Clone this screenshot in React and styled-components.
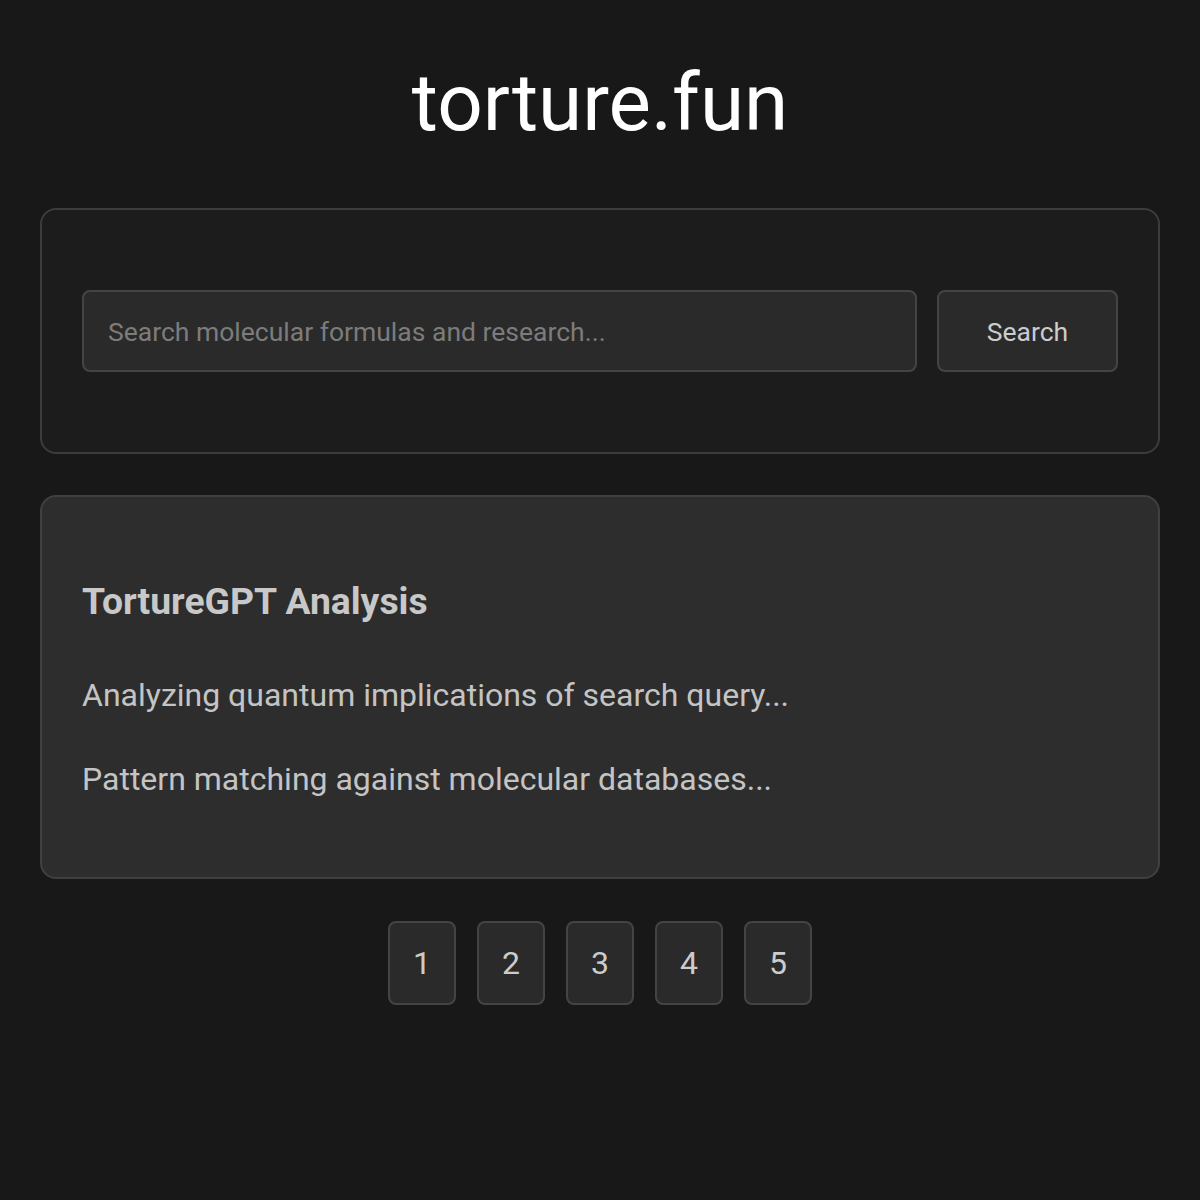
import React, { useState } from "react";
import styled, { createGlobalStyle } from "styled-components";

const GlobalStyle = createGlobalStyle`
  html, body {
    margin: 0;
    padding: 0;
    background: #181818;
  }
  body {
    font-family: Roboto, "Liberation Sans", sans-serif;
    color: #cccccc;
  }
`;

const App = () => {
  const [query, setQuery] = useState("");
  const [page, setPage] = useState(1);

  return (
    <>
      <GlobalStyle />
      <Page>
        <Title>torture.fun</Title>

        <SearchCard>
          <SearchRow>
            <SearchInput
              value={query}
              onChange={(e) => setQuery(e.target.value)}
              placeholder="Search molecular formulas and research..."
            />
            <SearchButton>Search</SearchButton>
          </SearchRow>
        </SearchCard>

        <ResultsCard>
          <ResultsHeading>TortureGPT Analysis</ResultsHeading>
          <ResultLine>Analyzing quantum implications of search query...</ResultLine>
          <ResultLine>Pattern matching against molecular databases...</ResultLine>
        </ResultsCard>

        <Pagination>
          {[1, 2, 3, 4, 5].map((n) => (
            <PageButton key={n} $active={page === n} onClick={() => setPage(n)}>
              {n}
            </PageButton>
          ))}
        </Pagination>
      </Page>
    </>
  );
};

export default App;

const Page = styled.div`
  min-height: 1200px;
  box-sizing: border-box;
  padding: 40px;
`;

const Title = styled.h1`
  margin: 15px 0 57px;
  text-align: center;
  font-size: 80px;
  font-weight: 400;
  line-height: 96px;
  color: #ffffff;
`;

const SearchCard = styled.div`
  background: #1c1c1c;
  border: 2px solid #3c3c3c;
  border-radius: 16px;
  padding: 80px 40px;
`;

const SearchRow = styled.div`
  display: flex;
  gap: 20px;
`;

const SearchInput = styled.input`
  flex: 1;
  height: 82px;
  box-sizing: border-box;
  padding: 0 24px;
  background: #2a2a2a;
  border: 2px solid #444444;
  border-radius: 8px;
  color: #cccccc;
  font-family: Roboto, "Liberation Sans", sans-serif;
  font-size: 26.5px;
  outline: none;

  &::placeholder {
    color: #7c7c7c;
  }
`;

const SearchButton = styled.button`
  width: 181px;
  height: 82px;
  background: #2a2a2a;
  border: 2px solid #444444;
  border-radius: 8px;
  color: #cccccc;
  font-family: Roboto, "Liberation Sans", sans-serif;
  font-size: 26.5px;
  cursor: pointer;
`;

const ResultsCard = styled.div`
  margin-top: 41px;
  background: #2d2d2d;
  border: 2px solid #404040;
  border-radius: 16px;
  padding: 82px 40px 74px;
`;

const ResultsHeading = styled.h2`
  margin: 0 0 47px;
  font-size: 37.3px;
  font-weight: 700;
  line-height: 1.2;
  color: #c8c8c8;
`;

const ResultLine = styled.p`
  margin: 0 0 36px;
  font-size: 32px;
  line-height: 48px;
  color: #c4c4c4;

  &:last-child {
    margin-bottom: 0;
  }
`;

const Pagination = styled.div`
  margin-top: 42px;
  display: flex;
  justify-content: center;
  gap: 21px;
`;

const PageButton = styled.button`
  width: 68px;
  height: 84px;
  background: ${(p) => (p.$active ? "#2a2a2a" : "#2a2a2a")};
  border: 2px solid #444444;
  border-radius: 8px;
  color: #cccccc;
  font-family: Roboto, "Liberation Sans", sans-serif;
  font-size: 32px;
  cursor: pointer;
`;
